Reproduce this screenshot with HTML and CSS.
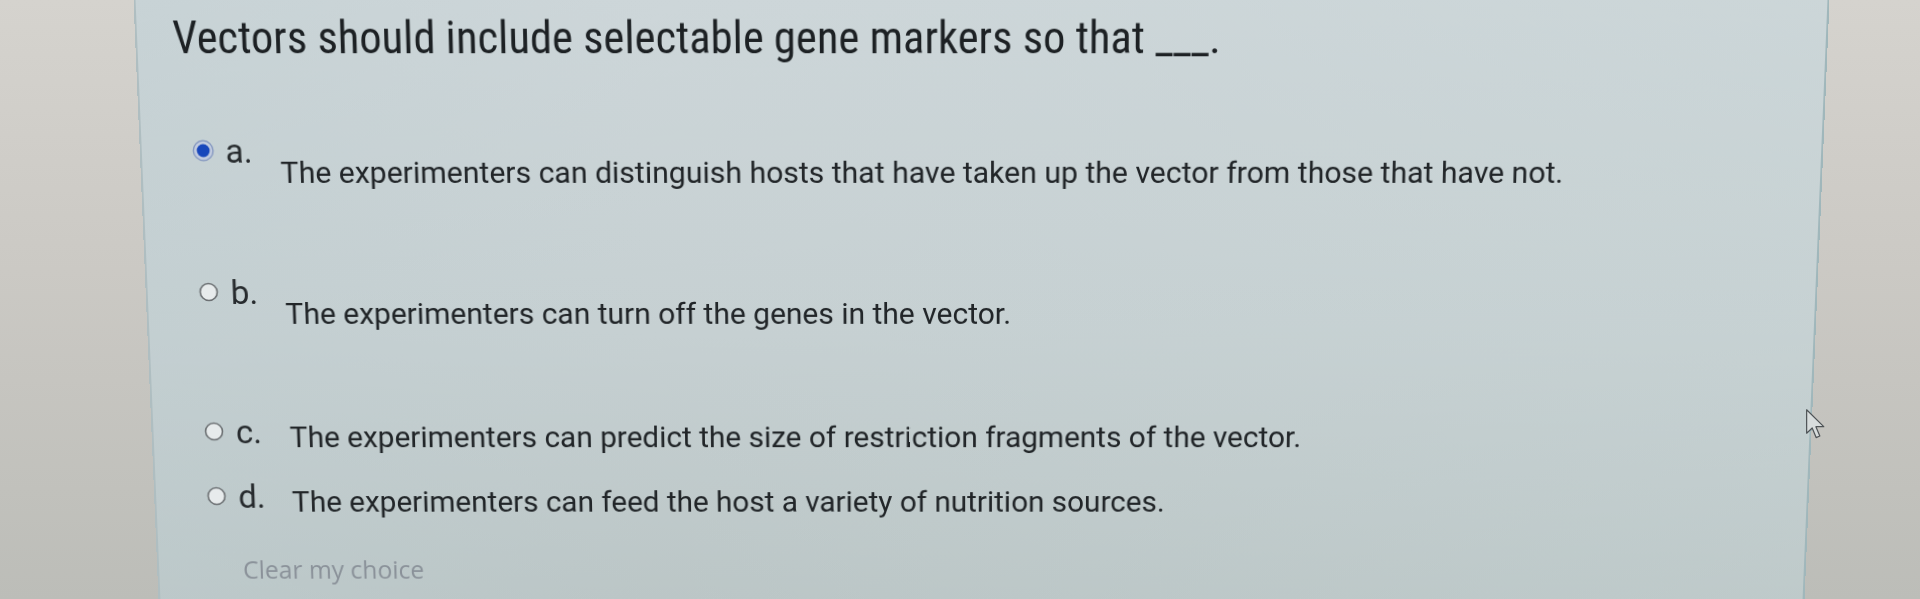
FILE: index.html
```html
<!DOCTYPE html>
<html lang="en">
<head>
<meta charset="utf-8">
<title>Question</title>
<link rel="stylesheet" href="styles.css">
</head>
<body>
  <main class="que">
    <div class="qtext">Vectors should include selectable gene markers so that ___.</div>

    <div class="answer">
      <div class="option">
        <span class="radio radio--checked">
          <svg viewBox="0 0 22 22" width="22" height="22"><circle cx="11" cy="11" r="9.8" fill="#c2cbdf" stroke="#7d91bd" stroke-width="1.2"/><circle cx="11" cy="11" r="6.4" fill="#1746bb"/></svg>
        </span>
        <span class="answernumber">a.</span>
        <div class="answer-body"><p class="answer-p">The experimenters can distinguish hosts that have taken up the vector from those that have not.</p></div>
      </div>

      <div class="option">
        <span class="radio">
          <svg viewBox="0 0 22 22" width="22" height="22"><circle cx="11" cy="11" r="8.5" fill="#e7ebec" stroke="#6c7073" stroke-width="1.6"/></svg>
        </span>
        <span class="answernumber">b.</span>
        <div class="answer-body"><p class="answer-p">The experimenters can turn off the genes in the vector.</p></div>
      </div>

      <div class="option">
        <span class="radio">
          <svg viewBox="0 0 22 22" width="22" height="22"><circle cx="11" cy="11" r="8.5" fill="#e7ebec" stroke="#6c7073" stroke-width="1.6"/></svg>
        </span>
        <span class="answernumber">c.</span>
        <div class="answer-body answer-body--plain">The experimenters can predict the size of restriction fragments of the vector.</div>
      </div>

      <div class="option">
        <span class="radio">
          <svg viewBox="0 0 22 22" width="22" height="22"><circle cx="11" cy="11" r="8.5" fill="#e7ebec" stroke="#6c7073" stroke-width="1.6"/></svg>
        </span>
        <span class="answernumber">d.</span>
        <div class="answer-body answer-body--plain">The experimenters can feed the host a variety of nutrition sources.</div>
      </div>
    </div>

    <div class="clear-choice">Clear my choice</div>
  </main>

  <svg class="pointer" viewBox="0 0 22 30" width="24" height="33">
    <path d="M1.5 1.5 L1.5 23 L6.6 18.2 L10.2 27 L13.6 25.6 L10 17 L17.2 17 Z" fill="#d7dcdc" stroke="#4e5356" stroke-width="1.1" stroke-linejoin="round"/>
  </svg>
</body>
</html>
```
FILE: styles.css
```css
html, body {
  margin: 0;
  height: 100%;
}

body {
  overflow: hidden;
  background: linear-gradient(180deg, #d5d3ce 0%, #cbc9c4 45%, #bcbdb8 100%);
  font-family: Roboto, "Liberation Sans", sans-serif;
  color: #24282b;
}

/* question card, photographed slightly tilted */
.que {
  box-sizing: border-box;
  width: 1671px;
  height: 660px;
  margin-left: 146px;
  padding: 14px 0 0 35px;
  background:
    linear-gradient(90deg, rgba(190, 205, 208, 0.35) 0%, rgba(255, 255, 255, 0) 30%, rgba(200, 214, 214, 0.25) 100%),
    linear-gradient(180deg, #cdd6d9 0%, #c6d0d2 50%, #b9c4c4 100%);
  border-left: 2px solid #afbec1;
  border-right: 2px solid #a0b7bb;
  transform-origin: 50% 300px;
  transform: perspective(2000px) rotateX(-5.7deg);
}

.qtext {
  font-family: "Roboto Condensed", Roboto, sans-serif;
  font-size: 44px;
  line-height: 52px;
  color: #1d2124;
  margin-bottom: 68px;
}

.answer {
  display: flex;
  flex-direction: column;
  gap: 30px;
  padding-left: 18px;
}

.option {
  display: flex;
  align-items: flex-start;
}

.radio {
  display: block;
  width: 22px;
  height: 22px;
  margin: 6px 11px 0 -3px;
  flex: none;
}

.radio svg {
  display: block;
}

.answernumber {
  width: 54px;
  flex: none;
  font-size: 33px;
  line-height: 36px;
  color: #272b2e;
}

.answer-body {
  font-size: 30px;
  line-height: 36px;
  color: #212528;
}

.answer-body--plain {
  margin: 5px 0 -5px;
}

.answer-p {
  margin: 21px 0 54px;
}

.clear-choice {
  margin: 41px 0 0 50px;
  font-family: "Open Sans", sans-serif;
  font-size: 25px;
  line-height: 30px;
  color: #8a9199;
}

/* mouse pointer resting over the card's right edge */
.pointer {
  position: absolute;
  left: 1805px;
  top: 408px;
}
```
